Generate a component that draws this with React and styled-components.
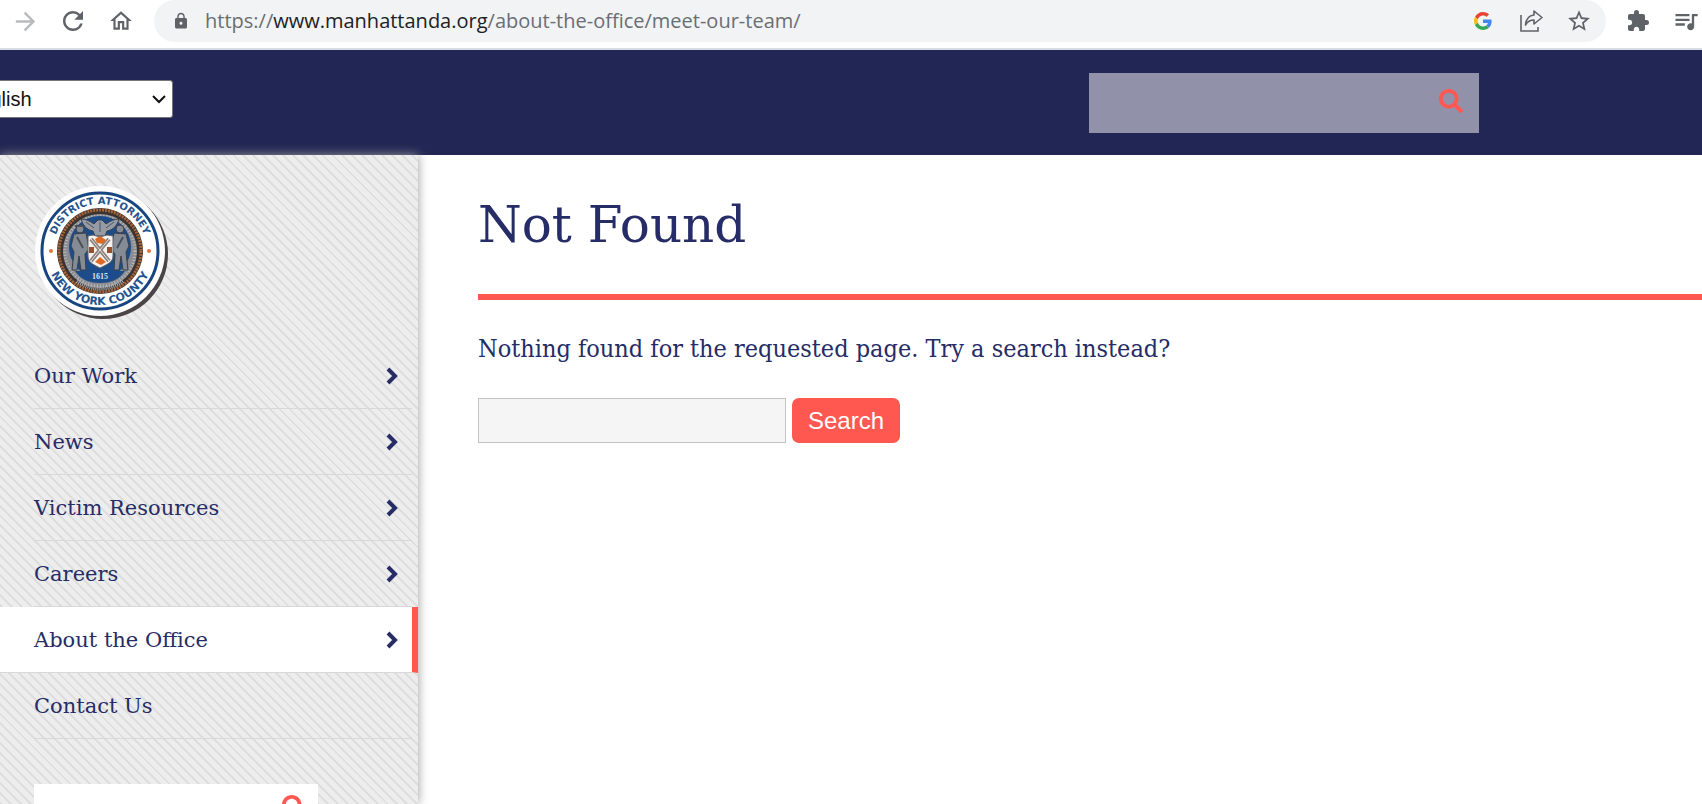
import React from 'react';
import styled, { createGlobalStyle, css } from 'styled-components';
import {
    MdArrowForward,
    MdExtension,
    MdLock,
    MdOutlineHome,
    MdOutlineQueueMusic,
    MdRefresh,
    MdStarBorder,
} from 'react-icons/md';
import { FaSearch } from 'react-icons/fa';

const navItems = [
    { label: 'Our Work', hasChildren: true },
    { label: 'News', hasChildren: true },
    { label: 'Victim Resources', hasChildren: true },
    { label: 'Careers', hasChildren: true },
    { label: 'About the Office', hasChildren: true, active: true },
    { label: 'Contact Us' },
];

const GoogleLogo = () => (
    <svg width="18" height="18" viewBox="0 0 48 48" aria-hidden="true">
        <path fill="#ea4335" d="M24 9.5c3.54 0 6.71 1.22 9.21 3.6l6.85-6.85C35.9 2.38 30.47 0 24 0 14.62 0 6.51 5.38 2.56 13.22l7.98 6.19C12.43 13.72 17.74 9.5 24 9.5z" />
        <path fill="#4285f4" d="M46.98 24.55c0-1.57-.15-3.09-.38-4.55H24v9.02h12.94c-.58 2.96-2.26 5.48-4.78 7.18l7.73 6c4.51-4.18 7.09-10.36 7.09-17.65z" />
        <path fill="#fbbc05" d="M10.53 28.59c-.48-1.45-.76-2.99-.76-4.59s.27-3.14.76-4.59l-7.98-6.19C.92 16.46 0 20.12 0 24s.92 7.54 2.56 10.78l7.97-6.19z" />
        <path fill="#34a853" d="M24 48c6.48 0 11.93-2.13 15.89-5.81l-7.73-6c-2.15 1.45-4.92 2.3-8.16 2.3-6.26 0-11.57-4.22-13.47-9.91l-7.98 6.19C6.51 42.62 14.62 48 24 48z" />
    </svg>
);

const ShareIcon = () => (
    <svg width="24" height="24" viewBox="0 0 24 24" fill="none" stroke="currentColor" strokeWidth="1.6" aria-hidden="true">
        <path d="M2 6v16h17v-4" />
        <path d="M15 2l8 6.500-8 6.500v-4c-4 0-6.500 1.500-8.500 5 .5-5.500 3-9.500 8.500-10z" strokeLinejoin="round" />
    </svg>
);

const Chevron = () => (
    <svg width="12" height="18" viewBox="0 0 12 18" fill="none" stroke="currentColor" strokeWidth="4" aria-hidden="true">
        <path d="M2 2l7 7-7 7" />
    </svg>
);

const Seal = () => (
    <svg width="138" height="138" viewBox="0 0 138 138" role="img" aria-label="District Attorney New York County">
        <defs>
            <path id="seal-top" d="M19 66a47 47 0 0 1 94 0" />
            <path id="seal-bottom" d="M12 66a54 54 0 0 0 108 0" />
        </defs>
        <circle cx="69" cy="69" r="65" fill="#4a4446" />
        <circle cx="66" cy="66" r="65" fill="#fdfdfe" />
        <circle cx="66" cy="66" r="58" fill="#fff" stroke="#17457f" strokeWidth="3" />
        <circle cx="66" cy="66" r="43" fill="#3a3330" />
        <circle cx="66" cy="66" r="41" fill="none" stroke="#a8663a" strokeWidth="3" strokeDasharray="2 1" />
        <circle cx="66" cy="66" r="37" fill="#8b8c90" />
        <circle cx="66" cy="66" r="35" fill="none" stroke="#b9babe" strokeWidth="3" strokeDasharray="1 2" />
        <circle cx="66" cy="62" r="31" fill="#1c4c89" />
        {/* eagle */}
        <path d="M47 34c5 0 9 2 13 5l4-4h4l4 4c4-3 8-5 13-5-2 7-6 11-12 12l-2 5H61l-2-5c-6-1-10-5-12-12z" fill="#969ba3" stroke="#37414f" />
        <path d="M52 37l8 6m20-6l-8 6M66 37v10" stroke="#4b5666" />
        {/* supporters */}
        <g fill="#858b94" stroke="#3a4049">
            <circle cx="46" cy="44" r="4" />
            <path d="M40 49l12-1 3 16-4 5 1 16h-5l-2-14-2 14h-5l2-18-3-6z" />
            <circle cx="86" cy="44" r="4" />
            <path d="M92 49l-12-1-3 16 4 5-1 16h5l2-14 2 14h5l-2-18 3-6z" />
        </g>
        <path d="M41 41h10M43 52l6 11M89 52l-6 11" stroke="#4b5058" strokeWidth="2" />
        {/* shield */}
        <path d="M54 51l5-1 7 2 7-2 6 1v20c0 6-5 8-13 12-8-4-12-6-12-12z" fill="#f4f1ef" stroke="#62666b" />
        <path d="M57 54l18 22m0-22L57 76" stroke="#8b827e" strokeWidth="4" />
        <path d="M57 54l18 22m0-22L57 76" stroke="#e4dfdc" strokeWidth="1" />
        <path d="M61 54l5-3 6 4-3 4-6-1zM61 77l5-5 6 5-5 3z" fill="#dc6a25" />
        <path d="M55 62h5v6h-5zM73 62h5v6h-5z" fill="#96502c" />
        <path d="M41 86h50c-6 9-15 12-25 12s-19-3-25-12z" fill="#1c4c89" />
        <path d="M43 96c14 10 32 10 46 0" fill="none" stroke="#aeb0b4" strokeWidth="4" strokeDasharray="1 1" />
        <text x="66" y="94" textAnchor="middle" fill="#dbe3ed" fontFamily="Liberation Serif, serif" fontWeight="bold" fontSize="8">1615</text>
        <circle cx="17" cy="66" r="2" fill="#d9783d" />
        <circle cx="115" cy="66" r="2" fill="#d9783d" />
        <g fill="#23548f" fontFamily="DejaVu Sans, sans-serif" fontWeight="bold" textAnchor="middle">
            <text fontSize="10"><textPath href="#seal-top" startOffset="50%">DISTRICT ATTORNEY</textPath></text>
            <text fontSize="11"><textPath href="#seal-bottom" startOffset="50%">NEW YORK COUNTY</textPath></text>
        </g>
    </svg>
);

const App = () => {
    return (
        <PageStyled>
            <GlobalStyle />
            <BrowserBar>
                <BarButton aria-label="Forward" disabled><MdArrowForward size={29} /></BarButton>
                <BarButton aria-label="Reload"><MdRefresh size={30} /></BarButton>
                <BarButton aria-label="Home"><MdOutlineHome size={26} /></BarButton>
                <AddressBar>
                    <MdLock size={18} />
                    <Url>https://<b>www.manhattanda.org</b>/about-the-office/meet-our-team/</Url>
                    <BarButton aria-label="Google"><GoogleLogo /></BarButton>
                    <BarButton aria-label="Share"><ShareIcon /></BarButton>
                    <BarButton aria-label="Bookmark"><MdStarBorder size={26} /></BarButton>
                </AddressBar>
                <BarButton aria-label="Extensions"><MdExtension /></BarButton>
                <BarButton aria-label="Media"><MdOutlineQueueMusic size={28} /></BarButton>
            </BrowserBar>

            <SiteHeader>
                <LanguageSelect>
                    <select aria-label="Language" defaultValue="en">
                        <option value="en">English</option>
                    </select>
                    <svg width="14" height="10" viewBox="0 0 14 10" fill="none" stroke="#111" strokeWidth="2" aria-hidden="true">
                        <path d="M1 2l6 6 6-6" />
                    </svg>
                </LanguageSelect>
                <HeaderSearch role="search">
                    <input type="text" aria-label="Search the site" />
                    <button type="button" aria-label="Search"><FaSearch /></button>
                </HeaderSearch>
            </SiteHeader>

            <Body>
                <Sidebar>
                    <SealLink href="#"><Seal /></SealLink>
                    <nav>
                        {navItems.map(({ label, hasChildren, active }) => (
                            <NavItem key={label} href="#" $active={active}>
                                <span>{label}</span>
                                {hasChildren && <Chevron />}
                            </NavItem>
                        ))}
                    </nav>
                    <SideSearch role="search">
                        <input type="text" aria-label="Search" />
                        <button type="button" aria-label="Search"><FaSearch /></button>
                    </SideSearch>
                </Sidebar>

                <Content>
                    <h1>Not Found</h1>
                    <p>Nothing found for the requested page. Try a search instead?</p>
                    <SearchForm>
                        <input type="text" aria-label="Search for" />
                        <button type="button">Search</button>
                    </SearchForm>
                </Content>
            </Body>
        </PageStyled>
    );
}

const navy = '#262c66';
const coral = '#ff5851';

const GlobalStyle = createGlobalStyle`
*{
    box-sizing: border-box;
}
body{
    margin: 0;
    background: #fff;
}
button, input, select{
    font-family: "Liberation Sans", Arial, sans-serif;
    margin: 0;
}
button{
    border: 0;
    padding: 0;
    background: none;
    cursor: pointer;
}
`;

const PageStyled = styled.div`
display: flex;
flex-direction: column;
height: 100vh;
overflow: hidden;
color: ${navy};
`;

const BrowserBar = styled.div`
display: flex;
align-items: center;
gap: 24px;
height: 50px;
flex-shrink: 0;
padding: 0 4px 6px 13px;
border-bottom: 2px solid #dadce5;
overflow: hidden;
`;

const BarButton = styled.button`
display: flex;
justify-content: center;
width: 24px;
flex-shrink: 0;
font-size: 24px;
color: #5f6368;
&:disabled{
    color: #b8babd;
}
svg{
    flex-shrink: 0;
}
`;

const AddressBar = styled.div`
display: flex;
align-items: center;
flex: 1;
gap: 24px;
height: 42px;
margin-left: -3px;
margin-right: -4px;
padding: 0 15px 0 18px;
border-radius: 21px;
background: #f1f3f4;
color: #5f6368;
`;

const Url = styled.span`
flex: 1;
margin-left: -9px;
font-family: "Open Sans", sans-serif;
font-size: 20px;
line-height: 28px;
white-space: nowrap;
color: #6a6e73;
b{
    font-weight: normal;
    color: #202124;
}
`;

const SiteHeader = styled.header`
display: flex;
align-items: flex-start;
justify-content: space-between;
flex-shrink: 0;
height: 105px;
padding-right: 13.1%;
background: #222654;
`;

const LanguageSelect = styled.div`
display: grid;
align-items: center;
justify-items: end;
width: 216px;
margin: 30px 0 0 -43px;
select, svg{
    grid-area: 1 / 1;
}
svg{
    margin-right: 7px;
    pointer-events: none;
}
select{
    appearance: none;
    width: 100%;
    height: 38px;
    padding: 0 8px;
    border: 1px solid #767676;
    border-radius: 3px;
    background: #fff;
    color: #111;
    font-size: 20px;
}
`;

const searchBox = css`
display: flex;
input{
    flex: 1;
    min-width: 0;
    border: 0;
    background: none;
    font-size: 20px;
}
button{
    width: 56px;
    color: ${coral};
    font-size: 24px;
    line-height: 1;
}
`;

const HeaderSearch = styled.form`
${searchBox}
width: 390px;
height: 60px;
margin-top: 23px;
background: #9192a9;
`;

const Body = styled.div`
display: flex;
flex: 1;
min-height: 0;
`;

const Sidebar = styled.aside`
position: relative;
width: 418px;
flex-shrink: 0;
background: #ededed repeating-linear-gradient(45deg, #dedede 0 2px, #ededed 2px 7px);
box-shadow: 0 0 10px #999;
`;

const SealLink = styled.a`
display: block;
height: 188px;
padding: 30px 0 0 34px;
`;

const NavItem = styled.a`
display: flex;
align-items: center;
justify-content: space-between;
height: 66px;
padding-right: 14px;
margin: 0 6px 0 34px;
border-bottom: 1px solid #d8d8da;
font-family: "DejaVu Serif", serif;
font-size: 21px;
line-height: 30px;
color: ${navy};
text-decoration: none;
${({ $active }) => $active && css`
    margin: 0;
    padding-left: 34px;
    background: #fff;
    border-right: 6px solid ${coral};
`}
`;

const SideSearch = styled.form`
${searchBox}
width: 284px;
height: 50px;
margin: 45px 0 0 34px;
background: #fff;
button{
    width: 48px;
}
`;

const Content = styled.main`
flex: 1;
min-width: 0;
padding: 34px 0 0 60px;
h1{
    margin: 0;
    padding-bottom: 33px;
    border-bottom: 6px solid ${coral};
    font-family: "DejaVu Serif", serif;
    font-size: 50px;
    font-weight: normal;
    line-height: 72px;
}
p{
    margin: 32px 0;
    font-family: "DejaVu Serif Condensed", "DejaVu Serif", serif;
    font-size: 25px;
    line-height: 34px;
}
`;

const SearchForm = styled.form`
display: flex;
gap: 6px;
input{
    width: 308px;
    height: 45px;
    padding: 0 12px;
    border: 1px solid #c4c4c8;
    background: #f5f5f5;
    font-size: 20px;
}
button{
    height: 45px;
    padding: 0 16px;
    border-radius: 7px;
    background: ${coral};
    color: #fff;
    font-size: 24px;
}
`;

export default App;
